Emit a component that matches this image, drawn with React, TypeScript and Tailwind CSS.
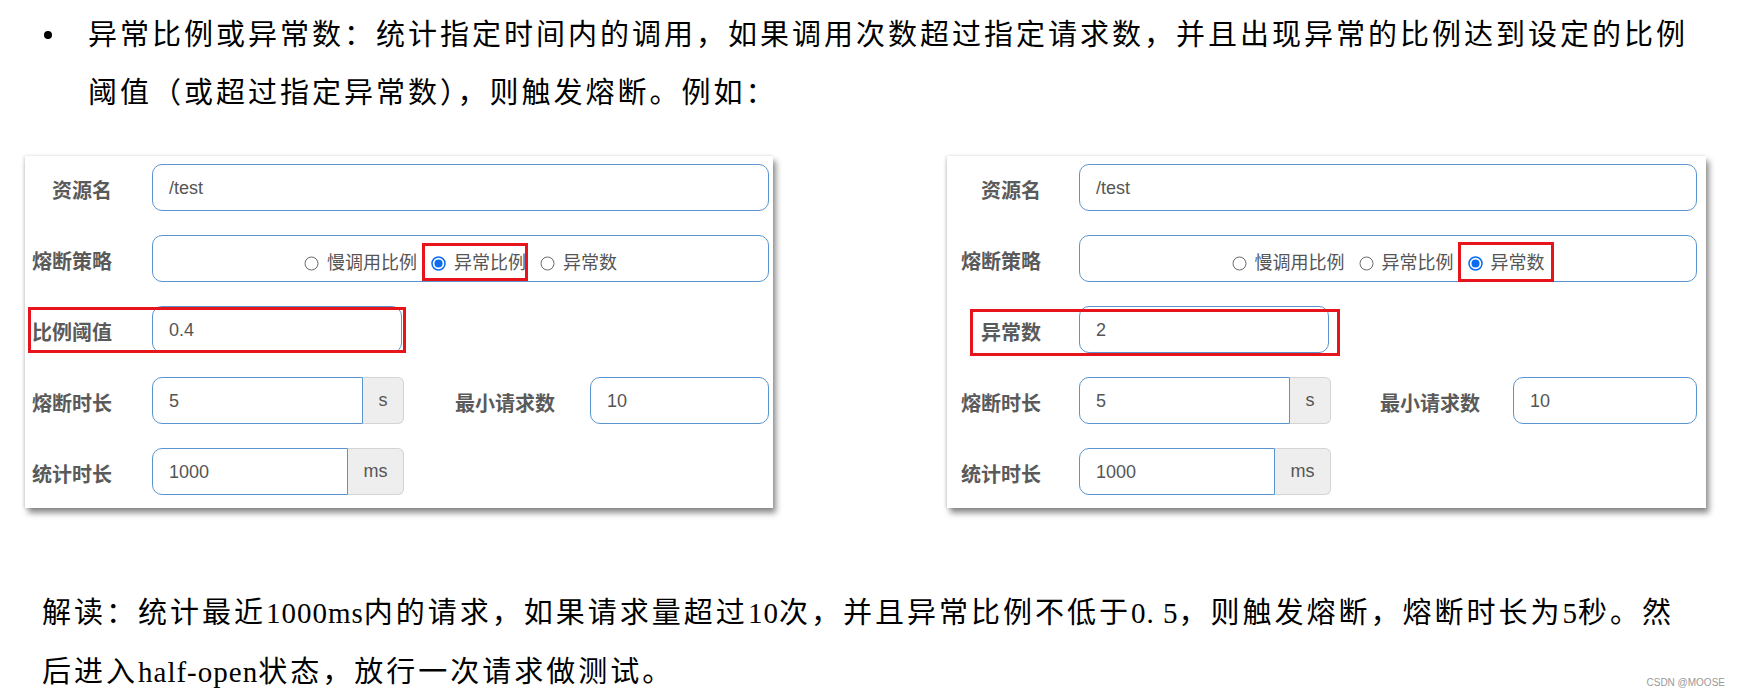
import React from "react";

type Variant = "ratio" | "count";

const serif = "font-['Liberation_Serif','Noto_Sans_CJK_SC',serif]";
const sans = "font-['Liberation_Sans','Noto_Sans_CJK_SC',sans-serif]";

const RadioDot = ({ checked }: { checked?: boolean }) => (
  <svg width="15" height="15" viewBox="0 0 15 15" className="shrink-0">
    {checked ? (
      <>
        <circle cx="7.5" cy="7.5" r="6.5" fill="white" stroke="#0b6cf0" strokeWidth="1.5" />
        <circle cx="7.5" cy="7.5" r="4" fill="#0b6cf0" />
      </>
    ) : (
      <circle cx="7.5" cy="7.5" r="6.5" fill="white" stroke="#6b6b6b" strokeWidth="1" />
    )}
  </svg>
);

const Option = ({ label, checked, mark }: { label: string; checked?: boolean; mark?: string }) => (
  <span className="relative flex items-center gap-[8px]">
    <RadioDot checked={checked} />
    <span>{label}</span>
    {mark && <span className={`absolute border-[3px] border-[#e8141c] ${mark}`} />}
  </span>
);

const Label = ({ text, w }: { text: string; w: string }) => (
  <div className={`${w} shrink-0 pt-[6px] text-right text-[20px] font-bold text-[#5a5a5a]`}>{text}</div>
);

// half-width runs inside the serif paragraphs sit tighter than the CJK text
const Latin = ({ children }: { children: React.ReactNode }) => (
  <span className="tracking-[1px]">{children}</span>
);

const Panel = ({ variant }: { variant: Variant }) => {
  const ratio = variant === "ratio";
  const labelW = ratio ? "w-[87px]" : "w-[94px]";
  const gap = ratio ? "gap-[40px]" : "gap-[38px]";
  const row = `relative flex h-[47px] items-center ${gap}`;
  const field = "flex h-full items-center border border-[#5b95d0] bg-white pl-[16px] pt-[2px]";
  const addon =
    "flex h-full items-center justify-center rounded-r-[6px] border border-l-0 border-[#d4d4d4] bg-[#eeeeee]";

  return (
    <div
      className={`${sans} flex flex-col gap-[24px] bg-white pt-[8px] pb-[13px] text-[18px] text-[#555] shadow-[3px_5px_6px_rgba(0,0,0,0.45),-1px_0_3px_rgba(0,0,0,0.15)] ${
        ratio ? "w-[748px] pr-[4px]" : "w-[759px] pr-[9px]"
      }`}
    >
      <div className={row}>
        <Label text="资源名" w={labelW} />
        <div className={`${field} flex-1 rounded-[10px]`}>/test</div>
      </div>

      <div className={row}>
        <Label text="熔断策略" w={labelW} />
        <div className="flex h-full flex-1 items-center justify-center gap-[14px] rounded-[10px] border border-[#5b95d0] pt-[9px]">
          <Option label="慢调用比例" />
          <Option
            label="异常比例"
            checked={ratio}
            mark={ratio ? "-left-[9px] -right-[2px] -top-[7px] -bottom-[4px]" : undefined}
          />
          <Option
            label="异常数"
            checked={!ratio}
            mark={!ratio ? "-left-[10px] -right-[9px] -top-[8px] -bottom-[5px]" : undefined}
          />
        </div>
      </div>

      <div className={row}>
        <Label text={ratio ? "比例阈值" : "异常数"} w={labelW} />
        <div className={`${field} w-[250px] rounded-[10px]`}>{ratio ? "0.4" : "2"}</div>
        <div
          className={`absolute border-[3px] border-[#e8141c] ${
            ratio ? "left-[3px] top-[1px] h-[46px] w-[378px]" : "left-[23px] top-[3px] h-[47px] w-[370px]"
          }`}
        />
      </div>

      <div className={row}>
        <Label text="熔断时长" w={labelW} />
        <div className="flex h-full">
          <div className={`${field} w-[211px] rounded-l-[10px]`}>5</div>
          <div className={`${addon} w-[41px]`}>s</div>
        </div>
        <div className="ml-[11px] w-[100px] shrink-0 pt-[6px] text-[20px] font-bold text-[#5a5a5a]">最小请求数</div>
        <div className={`${field} -ml-[5px] flex-1 rounded-[10px]`}>10</div>
      </div>

      <div className={row}>
        <Label text="统计时长" w={labelW} />
        <div className="flex h-full">
          <div className={`${field} w-[196px] rounded-l-[10px]`}>1000</div>
          <div className={`${addon} w-[56px]`}>ms</div>
        </div>
      </div>
    </div>
  );
};

export default function App() {
  return (
    <div className="relative h-[696px] w-[1739px] overflow-hidden bg-white text-black">
      <div className="flex pt-[6px] pl-[44px]">
        <div className="flex h-[58px] w-[44px] shrink-0 items-center">
          <span className="h-[8px] w-[8px] rounded-full bg-black" />
        </div>
        <div className={`${serif} text-[29px] leading-[58px] tracking-[3px]`}>
          <div className="whitespace-nowrap">
            异常比例或异常数：统计指定时间内的调用，如果调用次数超过指定请求数，并且出现异常的比例达到设定的比例
          </div>
          <div className="whitespace-nowrap">阈值（或超过指定异常数），则触发熔断。例如：</div>
        </div>
      </div>

      <div className="mt-[34px] flex gap-[174px] pl-[25px]">
        <Panel variant="ratio" />
        <Panel variant="count" />
      </div>

      <div className={`${serif} mt-[76px] pl-[42px] text-[29px] leading-[59px] tracking-[3px]`}>
        <div className="whitespace-nowrap">
          解读：统计最近<Latin>1000ms</Latin>内的请求，如果请求量超过<Latin>10</Latin>次，并且异常比例不低于
          <Latin>0. 5</Latin>，则触发熔断，熔断时长为<Latin>5</Latin>秒。然
        </div>
        <div className="whitespace-nowrap">
          后进入<Latin>half-open</Latin>状态，放行一次请求做测试。
        </div>
      </div>

      <div className={`${sans} absolute right-[14px] top-[676px] text-[10px] leading-[14px] text-[#999]`}>
        CSDN @MOOSE
      </div>
    </div>
  );
}
